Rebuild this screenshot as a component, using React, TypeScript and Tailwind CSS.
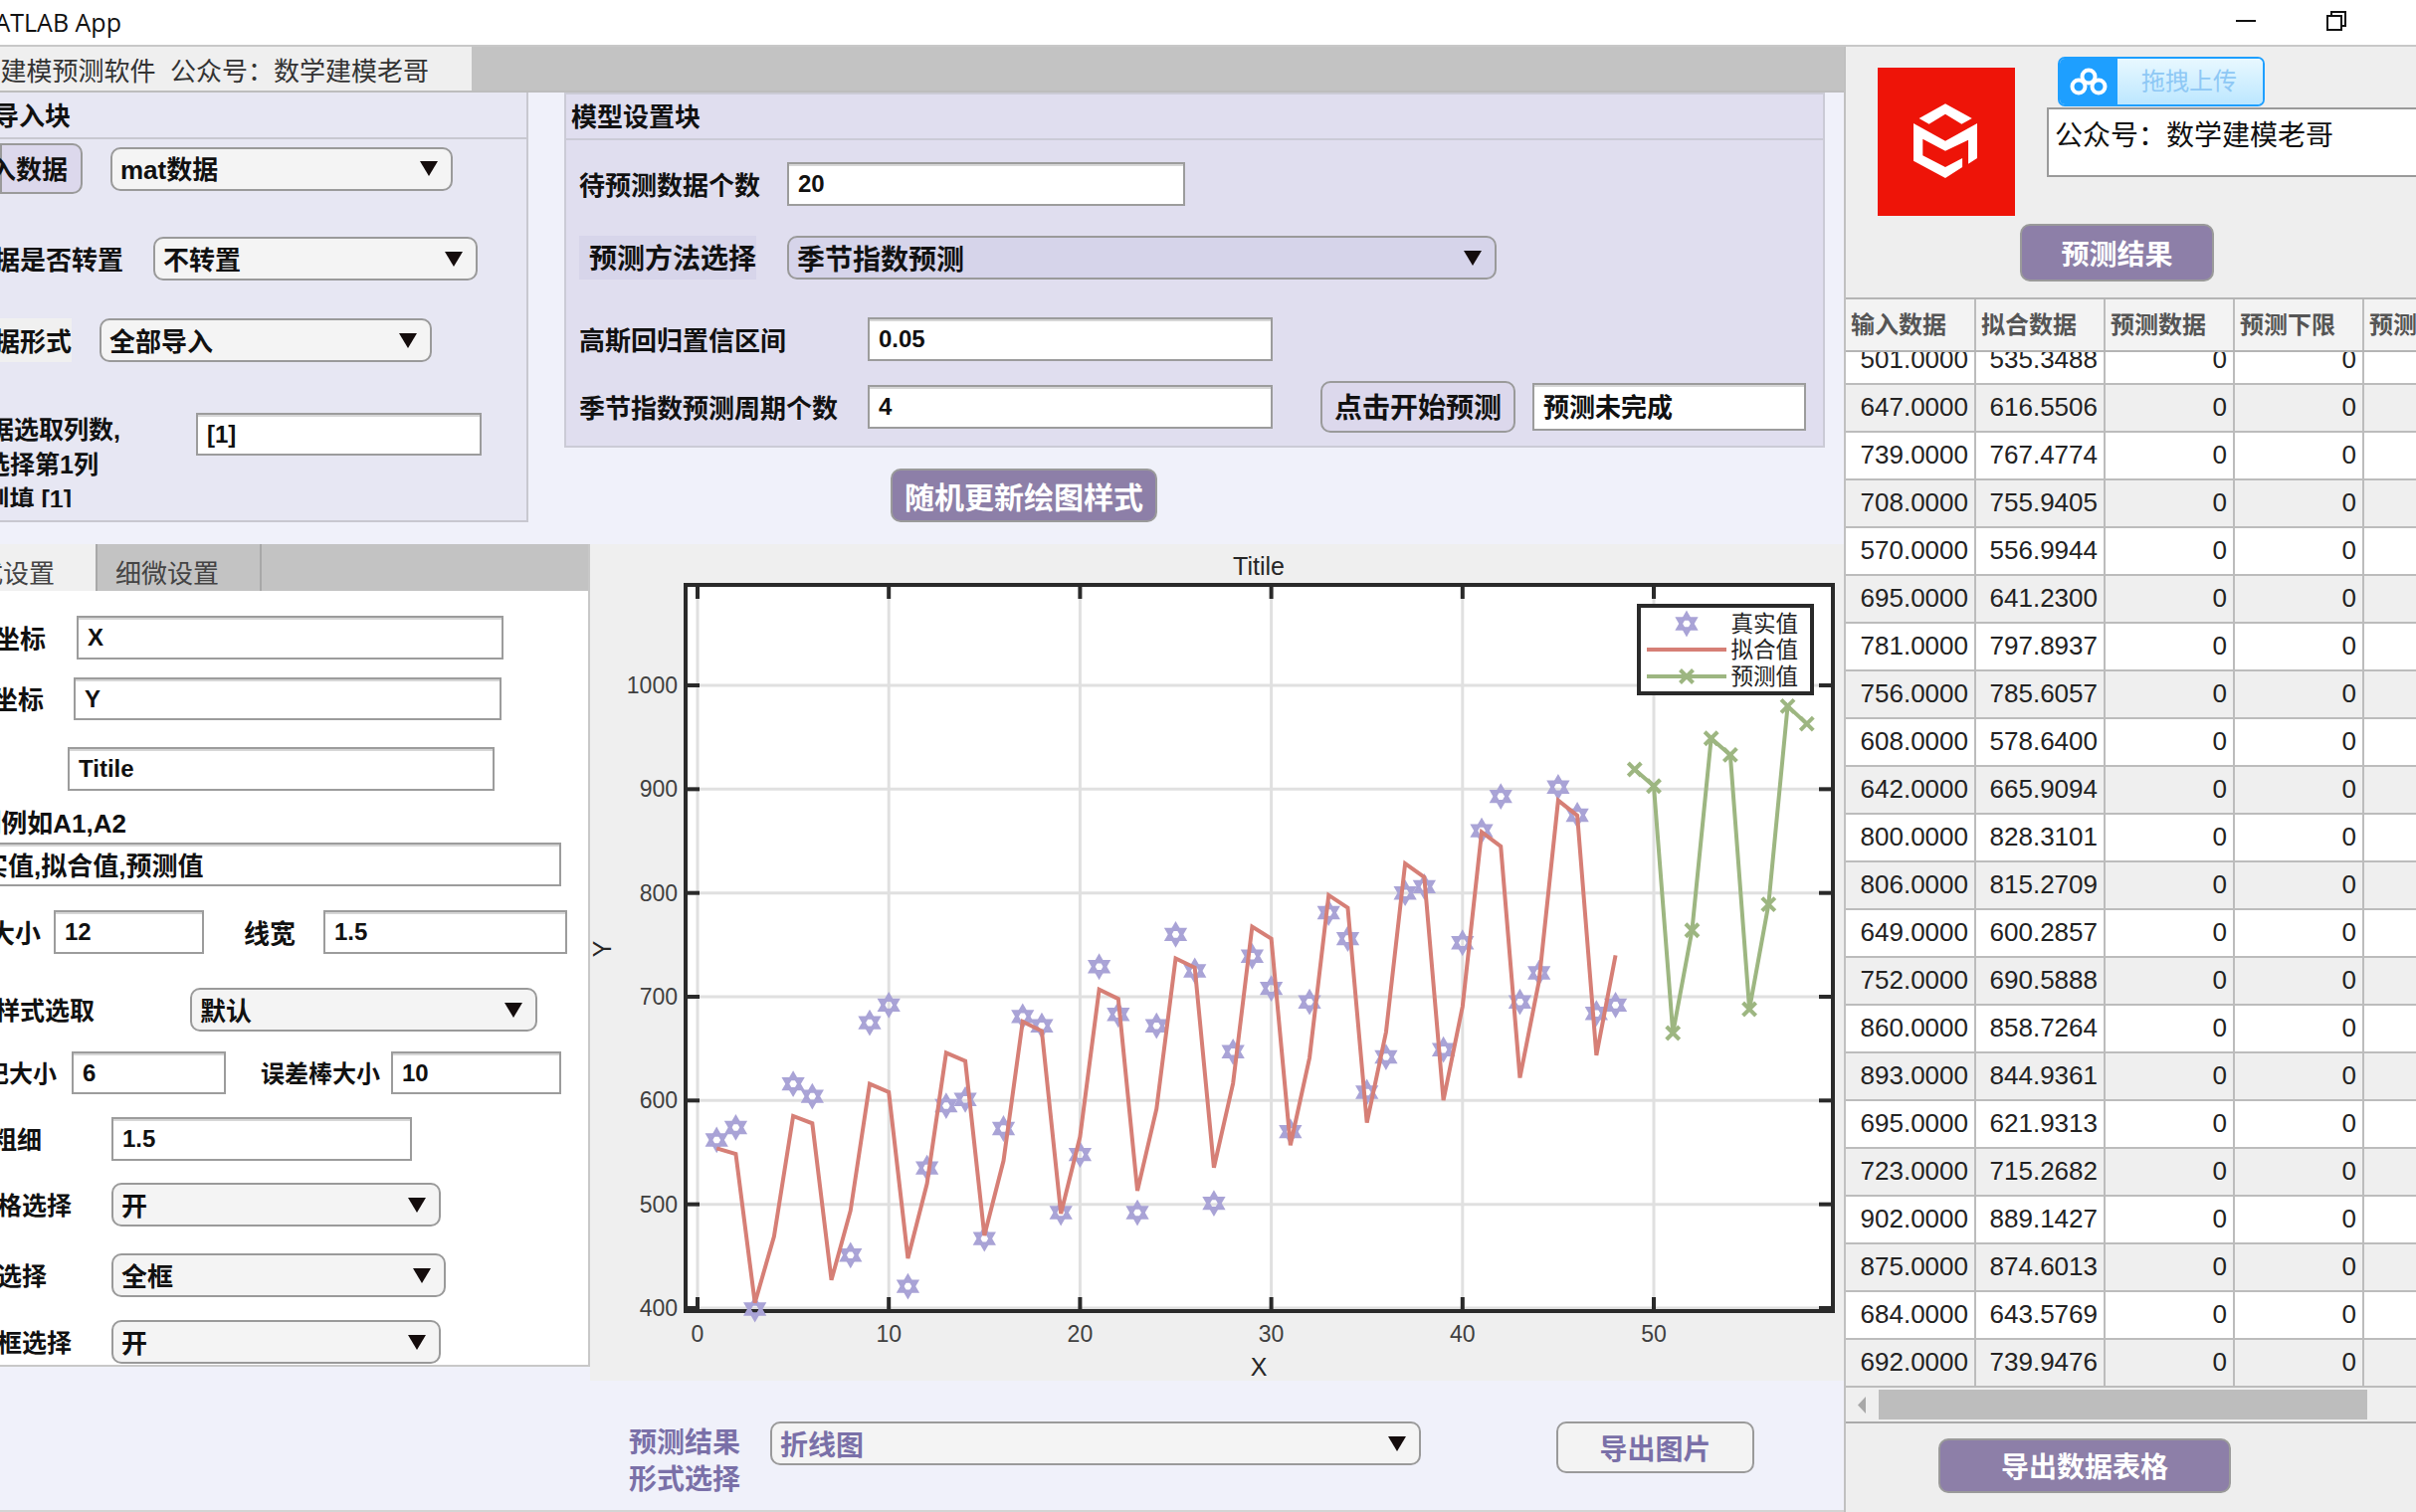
// App.tsx
import React from 'react';

const xp = (x: number) => 701 + x * 19.22;
const yp = (v: number) => 1315 - (v - 400) * 1.0433;

const tableRows: [string, string][] = [
  ['501.0000', '535.3488'], ['647.0000', '616.5506'], ['739.0000', '767.4774'], ['708.0000', '755.9405'],
  ['570.0000', '556.9944'], ['695.0000', '641.2300'], ['781.0000', '797.8937'], ['756.0000', '785.6057'],
  ['608.0000', '578.6400'], ['642.0000', '665.9094'], ['800.0000', '828.3101'], ['806.0000', '815.2709'],
  ['649.0000', '600.2857'], ['752.0000', '690.5888'], ['860.0000', '858.7264'], ['893.0000', '844.9361'],
  ['695.0000', '621.9313'], ['723.0000', '715.2682'], ['902.0000', '889.1427'], ['875.0000', '874.6013'],
  ['684.0000', '643.5769'], ['692.0000', '739.9476'],
];

const actual: [number, number][] = [
  [1, 562], [2, 574], [3, 399], [5, 616], [6, 604], [8, 451], [9, 675], [10, 692], [11, 421], [12, 535],
  [13, 595], [14, 601], [15, 467], [16, 573], [17, 681], [18, 672], [19, 492], [20, 548], [21, 729], [22, 683],
  [23, 492], [24, 672], [25, 760], [26, 725], [27, 501], [28, 647], [29, 739], [30, 708], [31, 570], [32, 695],
  [33, 781], [34, 756], [35, 608], [36, 642], [37, 800], [38, 806], [39, 649], [40, 752], [41, 860], [42, 893],
  [43, 695], [44, 723], [45, 902], [46, 875], [47, 684], [48, 692],
];

const fitted = [
  554, 548.6, 405, 469, 585, 578, 427, 494, 616, 608, 448, 520, 646, 638, 470, 542, 676, 667, 491, 565, 707, 698,
  513, 592, 737, 728, 535.35, 616.55, 767.48, 755.94, 556.99, 641.23, 797.89, 785.61, 578.64, 665.91, 828.31,
  815.27, 600.29, 690.59, 858.73, 844.94, 621.93, 715.27, 889.14, 874.6, 643.58, 739.95,
];

const predicted = [919, 903, 665, 764, 949, 933, 688, 789, 980, 963];

const Arrow = () => (
  <svg width="18" height="15" viewBox="0 0 18 15" className="shrink-0">
    <polygon points="0,0 18,0 9,15" fill="#140c0c" />
  </svg>
);

const Select: React.FC<{ value: string; className: string; textClass?: string }> = ({ value, className, textClass }) => (
  <div className={`box-border h-[44px] shrink-0 rounded-[10px] border-2 border-[#9a9a9a] flex items-center justify-between pl-[8px] pr-[13px] ${className}`}>
    <span className={`leading-none font-bold whitespace-nowrap ${textClass ?? 'pt-[3px] text-[26px] text-[#111]'}`}>{value}</span>
    <Arrow />
  </div>
);

const Input: React.FC<{ value: string; className: string; textClass?: string }> = ({ value, className, textClass }) => (
  <div className={`box-border shrink-0 bg-white border-2 border-[#9c9c9c] shadow-[inset_0_2px_0_#d6d6d6] flex items-center pl-[9px] font-bold whitespace-nowrap text-[#111] ${textClass ?? 'text-[24px]'} ${className}`}>
    {value}
  </div>
);

const Label: React.FC<{ text: string; className: string }> = ({ text, className }) => (
  <div className={`shrink-0 flex justify-end whitespace-nowrap font-bold text-[26px] text-[#111] ${className}`}>
    <span className="shrink-0 leading-none pt-[3px]">{text}</span>
  </div>
);

const Star: React.FC<{ x: number; y: number }> = ({ x, y }) => (
  <g transform={`translate(${x} ${y})`} fill="none" stroke="#a9a3d6" strokeWidth="3.4">
    <polygon points="0,-10 8.7,5 -8.7,5" />
    <polygon points="0,10 8.7,-5 -8.7,-5" />
  </g>
);

const Cross: React.FC<{ x: number; y: number }> = ({ x, y }) => (
  <g stroke="#9db681" strokeWidth="4">
    <line x1={x - 6.5} y1={y - 6.5} x2={x + 6.5} y2={y + 6.5} />
    <line x1={x - 6.5} y1={y + 6.5} x2={x + 6.5} y2={y - 6.5} />
  </g>
);

const Chart = () => {
  const xTicks = [0, 10, 20, 30, 40, 50];
  const yTicks = [400, 500, 600, 700, 800, 900, 1000];
  return (
    <svg width="1260" height="841" viewBox="593 547 1260 841" className="block">
      <rect x="689" y="588" width="1153" height="730" fill="#fff" />
      {xTicks.map((t) => (
        <line key={t} x1={xp(t)} y1="590" x2={xp(t)} y2="1316" stroke="#e0e0e0" strokeWidth="3" />
      ))}
      {yTicks.map((t) => (
        <line key={t} x1="691" y1={yp(t)} x2="1840" y2={yp(t)} stroke="#e0e0e0" strokeWidth="3" />
      ))}
      {xTicks.map((t) => (
        <g key={t} stroke="#2a2a2a" strokeWidth="4">
          <line x1={xp(t)} y1="590" x2={xp(t)} y2="602" />
          <line x1={xp(t)} y1="1304" x2={xp(t)} y2="1316" />
        </g>
      ))}
      {yTicks.map((t) => (
        <g key={t} stroke="#2a2a2a" strokeWidth="4">
          <line x1="691" y1={yp(t)} x2="703" y2={yp(t)} />
          <line x1="1828" y1={yp(t)} x2="1840" y2={yp(t)} />
        </g>
      ))}
      <rect x="689" y="588" width="1153" height="730" fill="none" stroke="#2a2a2a" strokeWidth="4" />
      {actual.map(([x, v]) => (
        <Star key={x} x={xp(x)} y={yp(v)} />
      ))}
      <polyline
        points={fitted.map((v, i) => `${xp(i + 1)},${yp(v)}`).join(' ')}
        fill="none"
        stroke="#d67f76"
        strokeWidth="4"
        strokeLinejoin="miter"
      />
      <polyline
        points={predicted.map((v, i) => `${xp(i + 49)},${yp(v)}`).join(' ')}
        fill="none"
        stroke="#9db681"
        strokeWidth="4"
      />
      {predicted.map((v, i) => (
        <Cross key={i} x={xp(i + 49)} y={yp(v)} />
      ))}
      <g fill="#404040" fontSize="23">
        {xTicks.map((t) => (
          <text key={t} x={xp(t)} y="1349" textAnchor="middle">{t}</text>
        ))}
        {yTicks.map((t) => (
          <text key={t} x="681" y={yp(t) + 8} textAnchor="end">{t}</text>
        ))}
      </g>
      <g fill="#262626" fontSize="25" textAnchor="middle">
        <text x="1265" y="578">Titile</text>
        <text x="1265" y="1383">X</text>
        <text transform="translate(614 954) rotate(-90)">Y</text>
      </g>
      <rect x="1647" y="609" width="174" height="88" fill="#fff" stroke="#2a2a2a" strokeWidth="4" />
      <Star x={1695} y={627} />
      <line x1="1655" y1="653" x2="1735" y2="653" stroke="#d67f76" strokeWidth="4" />
      <line x1="1655" y1="680" x2="1735" y2="680" stroke="#9db681" strokeWidth="4" />
      <Cross x={1695} y={680} />
      <g fill="#222" fontSize="22.5" textAnchor="end">
        <text x="1807" y="635">真实值</text>
        <text x="1807" y="661">拟合值</text>
        <text x="1807" y="688">预测值</text>
      </g>
    </svg>
  );
};

const DataPanel = () => (
  <div className="box-border w-[531px] h-[432px] shrink-0 bg-[#e7e7f3] border-r-2 border-b-2 border-[#c8c8d0] overflow-hidden">
    <div className="h-[47px] border-b-2 border-[#c8c8d0] box-border flex items-center">
      <Label text="数据导入块" className="w-[71px]" />
    </div>
    <div className="flex items-center mt-[4px]">
      <div className="box-border w-[83px] h-[51px] shrink-0 bg-[#dcd8ec] border-2 border-[#9a9a9a] rounded-r-[10px] flex justify-end items-center pr-[13px] pt-[4px] font-bold text-[26px] text-[#111] whitespace-nowrap">
        <span className="shrink-0">导入数据</span>
      </div>
      <Select value="mat数据" className="w-[344px] ml-[28px] bg-[#f4f4f4]" />
    </div>
    <div className="flex items-center mt-[43px]">
      <Label text="数据是否转置" className="w-[124px]" />
      <Select value="不转置" className="w-[326px] ml-[30px] bg-[#f4f4f4]" />
    </div>
    <div className="flex items-center mt-[38px]">
      <Label text="数据形式" className="w-[72px] h-[44px] items-center bg-[#f0f0f0]" />
      <Select value="全部导入" className="w-[334px] ml-[28px] bg-[#f4f4f4]" />
    </div>
    <div className="flex items-start mt-[51px]">
      <div className="w-[125px] h-[95px] shrink-0 overflow-hidden font-bold text-[25px] leading-[35px] text-[#111]">
        <div className="w-[121px] flex justify-end whitespace-nowrap"><span className="shrink-0">据选取列数,</span></div>
        <div className="w-[99px] flex justify-end whitespace-nowrap"><span className="shrink-0">选择第1列</span></div>
        <div className="w-[72px] flex justify-end whitespace-nowrap"><span className="shrink-0">则填 [1]</span></div>
      </div>
      <Input value="[1]" className="w-[287px] h-[43px] ml-[72px]" />
    </div>
  </div>
);

const ModelPanel = () => (
  <div className="box-border w-[1267px] h-[357px] bg-[#e0deef] border-2 border-[#cbcbd6]">
    <div className="box-border h-[46px] border-b-2 border-[#cbcbd6] flex items-center pl-[5px] pt-[3px] font-bold text-[26px] text-[#111]">
      模型设置块
    </div>
    <div className="flex items-center ml-[13px] mt-[22px]">
      <Label text="待预测数据个数" className="w-[209px] !justify-start" />
      <Input value="20" className="w-[400px] h-[44px]" />
    </div>
    <div className="flex items-center ml-[13px] mt-[30px]">
      <div className="w-[178px] h-[44px] shrink-0 bg-[#d7d5ea] pl-[10px] pt-[4px] flex items-center font-bold text-[28px] text-[#111] whitespace-nowrap">
        预测方法选择
      </div>
      <Select value="季节指数预测" className="w-[713px] ml-[31px] bg-[#d6d4ea]" textClass="pt-[5px] text-[28px] text-[#111]" />
    </div>
    <div className="flex items-center ml-[13px] mt-[38px]">
      <Label text="高斯回归置信区间" className="w-[290px] !justify-start" />
      <Input value="0.05" className="w-[407px] h-[44px]" />
    </div>
    <div className="flex items-center h-[52px] ml-[13px] mt-[20px]">
      <Label text="季节指数预测周期个数" className="w-[290px] !justify-start" />
      <Input value="4" className="w-[407px] h-[44px]" />
      <div className="box-border w-[196px] h-[52px] ml-[48px] shrink-0 bg-[#dcd8ec] border-2 border-[#9a9a9a] rounded-[10px] flex items-center justify-center pt-[4px] font-bold text-[28px] text-[#111] whitespace-nowrap">
        点击开始预测
      </div>
      <Input value="预测未完成" className="w-[275px] h-[48px] ml-[17px]" textClass="text-[26px] pt-[3px]" />
    </div>
  </div>
);

const SettingsPanel = () => (
  <div className="box-border w-[593px] h-[827px] shrink-0 self-start bg-white border-r-2 border-b-2 border-[#c8c8c8] overflow-hidden">
    <div className="h-[47px] bg-[#c3c3c3] flex text-[26px] text-[#444]">
      <div className="w-[98px] bg-[#f0f0f0] flex justify-end items-center pr-[41px] pt-[14px] whitespace-nowrap border-r-2 border-[#a8a8a8]">
        <span className="shrink-0">样式设置</span>
      </div>
      <div className="w-[165px] pl-[18px] pt-[14px] flex items-center border-r-2 border-[#a8a8a8]">细微设置</div>
    </div>
    <div className="flex items-center mt-[25px]">
      <Label text="X坐标" className="w-[46px]" />
      <Input value="X" className="w-[429px] h-[44px] ml-[31px]" />
    </div>
    <div className="flex items-center mt-[18px]">
      <Label text="Y坐标" className="w-[44px]" />
      <Input value="Y" className="w-[430px] h-[43px] ml-[30px]" />
    </div>
    <Input value="Titile" className="w-[429px] h-[44px] ml-[68px] mt-[27px]" />
    <div className="flex items-center h-[36px] mt-[13px]">
      <Label text="列例如A1,A2" className="w-[127px]" />
    </div>
    <Input value="真实值,拟合值,预测值" className="w-[619px] h-[44px] ml-[-55px] mt-[3px]" textClass="text-[26px] pt-[4px]" />
    <div className="flex items-center mt-[24px]">
      <Label text="大小" className="w-[41px]" />
      <Input value="12" className="w-[151px] h-[44px] ml-[13px]" />
      <Label text="线宽" className="ml-[40px] w-[52px]" />
      <Input value="1.5" className="w-[245px] h-[44px] ml-[28px]" />
    </div>
    <div className="flex items-center mt-[34px]">
      <Label text="样式选取" className="w-[95px] !text-[25px]" />
      <Select value="默认" className="w-[349px] ml-[96px] bg-[#f4f4f4]" />
    </div>
    <div className="flex items-center mt-[20px]">
      <Label text="标记大小" className="w-[57px] !text-[24px]" />
      <Input value="6" className="w-[155px] h-[43px] ml-[15px]" />
      <Label text="误差棒大小" className="w-[119px] ml-[36px] !text-[24px]" />
      <Input value="10" className="w-[171px] h-[43px] ml-[11px]" />
    </div>
    <div className="flex items-center mt-[23px]">
      <Label text="线粗细" className="w-[42px] !text-[25px]" />
      <Input value="1.5" className="w-[302px] h-[44px] ml-[70px]" />
    </div>
    <div className="flex items-center mt-[22px]">
      <Label text="网格选择" className="w-[72px] !text-[25px]" />
      <Select value="开" className="w-[331px] ml-[40px] bg-[#f4f4f4]" />
    </div>
    <div className="flex items-center mt-[27px]">
      <Label text="框选择" className="w-[47px] !text-[25px]" />
      <Select value="全框" className="w-[336px] ml-[65px] bg-[#f4f4f4]" />
    </div>
    <div className="flex items-center mt-[23px]">
      <Label text="图框选择" className="w-[72px] !text-[25px]" />
      <Select value="开" className="w-[331px] ml-[40px] bg-[#f4f4f4]" />
    </div>
  </div>
);

const ResultTable = () => {
  const headers = ['输入数据', '拟合数据', '预测数据', '预测下限', '预测上限'];
  const cellBase = 'box-border shrink-0 h-[48px] border-r-2 border-b-2 border-[#bcbcbc] flex items-center justify-end pr-[6px] pb-[2px]';
  return (
    <div className="mt-[16px]">
      <div className="box-border h-[55px] flex bg-[#f3f3f3] border-t-2 border-b-2 border-[#b4b4b4]">
        {headers.map((h, i) => (
          <div
            key={h}
            className={`box-border shrink-0 border-r-2 border-[#bcbcbc] flex items-center pl-[5px] font-bold text-[24px] text-[#555] whitespace-nowrap ${i === 0 ? 'w-[131px]' : 'w-[130px]'}`}
          >
            {h}
          </div>
        ))}
      </div>
      {tableRows.map(([a, b], i) => (
        <div
          key={i}
          className={`flex text-[26px] text-[#222] ${i === 0 ? 'h-[33px] items-end overflow-hidden' : 'h-[48px]'} ${i % 2 === 1 ? 'bg-[#efefef]' : 'bg-white'}`}
        >
          <div className={`${cellBase} w-[131px]`}>{a}</div>
          <div className={`${cellBase} w-[130px]`}>{b}</div>
          <div className={`${cellBase} w-[130px]`}>0</div>
          <div className={`${cellBase} w-[130px]`}>0</div>
          <div className={`${cellBase} w-[130px]`} />
        </div>
      ))}
      <div className="box-border h-[36px] bg-[#efefef] border-b-2 border-[#aaa] flex items-center">
        <svg width="8" height="17" viewBox="0 0 8 17" className="ml-[12px] shrink-0">
          <polygon points="8,0 8,17 0,8.5" fill="#a8a8a8" />
        </svg>
        <div className="w-[491px] h-[30px] ml-[13px] shrink-0 bg-[#bdbdbd]" />
      </div>
    </div>
  );
};

const RightPanel = () => (
  <div className="box-border w-[575px] shrink-0 bg-[#eeeeee] border-l-2 border-[#c0c0c0] overflow-hidden">
    <div className="flex items-start mt-[10px] h-[160px]">
      <div className="w-[138px] h-[149px] ml-[32px] mt-[11px] shrink-0 bg-[#ee1408] flex items-center justify-center">
        <svg width="64" height="75" viewBox="220 305 172 225" preserveAspectRatio="none" className="mb-[2px] mr-[2px]">
          <polygon points="306,306 378,350 350,367 306,337 262,367 235,350" fill="#fff" />
          <polygon
            points="220,365 306,418 392,365 392,470 368,487 368,415 306,448 245,412 245,462 306,497 352,470 352,497 306,530 220,478"
            fill="#fff"
          />
        </svg>
      </div>
      <div className="ml-[32px] shrink-0">
        <div className="box-border w-[208px] h-[50px] ml-[11px] border-2 border-[#1e9fff] rounded-[7px] overflow-hidden flex">
          <div className="w-[58px] shrink-0 bg-[#1e9fff] flex items-center justify-center">
            <svg width="38" height="30" viewBox="0 0 38 30">
              <g fill="none" stroke="#fff" strokeWidth="4">
                <circle cx="19" cy="10" r="6.5" />
                <circle cx="9" cy="20" r="6.5" />
                <circle cx="29" cy="20" r="6.5" />
              </g>
            </svg>
          </div>
          <div className="flex-1 bg-gradient-to-b from-[#e8f8ff] to-[#bce7ff] flex items-center pl-[24px] text-[24px] text-[#8ec8f5] whitespace-nowrap">
            拖拽上传
          </div>
        </div>
        <div className="box-border w-[420px] h-[70px] mt-[1px] bg-white border-2 border-[#9a9a9a] pl-[6px] pt-[7px] text-[28px] leading-[40px] text-[#111] whitespace-nowrap">
          公众号：数学建模老哥
        </div>
      </div>
    </div>
    <div className="box-border w-[195px] h-[58px] ml-[175px] mt-[8px] bg-[#8d7fa8] border-2 border-[#9a9a9a] rounded-[10px] flex items-center justify-center pt-[6px] font-bold text-[28px] text-white">
      预测结果
    </div>
    <ResultTable />
    <div className="box-border w-[294px] h-[55px] ml-[93px] mt-[15px] bg-[#8d7fa8] border-2 border-[#9a9a9a] rounded-[10px] flex items-center justify-center pt-[5px] font-bold text-[28px] text-white">
      导出数据表格
    </div>
  </div>
);

const App: React.FC = () => {
  return (
    <div className="w-[2428px] h-[1520px] overflow-hidden flex flex-col bg-[#f0f1fa] font-['Liberation_Sans','Noto_Sans_CJK_SC',sans-serif]">
      <div className="box-border h-[47px] shrink-0 bg-white border-b-2 border-[#c8c8c8] flex items-center">
        <span className="ml-[-28px] font-['Open_Sans','Noto_Sans_CJK_SC',sans-serif] text-[25px] text-[#111] whitespace-nowrap">MATLAB App</span>
        <svg width="20" height="2" viewBox="0 0 20 2" className="ml-auto mb-[3px]">
          <rect width="20" height="2" fill="#111" />
        </svg>
        <svg width="20" height="20" viewBox="0 0 20 20" className="ml-[71px] mr-[70px] mb-[3px]" fill="none" stroke="#111" strokeWidth="2">
          <rect x="1" y="5" width="14" height="14" />
          <path d="M5 5V1H19V15H15" />
        </svg>
      </div>
      <div className="flex flex-1 min-h-0">
        <div className="w-[1853px] shrink-0 flex flex-col">
          <div className="box-border h-[46px] shrink-0 bg-[#c3c3c3] border-b-2 border-[#bdbdbd] flex">
            <div className="w-[474px] bg-[#efefef] flex justify-end items-center pr-[43px] pt-[7px] whitespace-nowrap text-[26px] text-[#333]">
              <span className="shrink-0">数学建模预测软件&nbsp;&nbsp;公众号：数学建模老哥</span>
            </div>
          </div>
          <div className="h-[454px] shrink-0 flex items-start">
            <DataPanel />
            <div className="ml-[36px] flex flex-col items-start">
              <ModelPanel />
              <div className="box-border w-[268px] h-[54px] ml-[328px] mt-[21px] bg-[#8d7fa8] border-2 border-[#9a9a9a] rounded-[10px] flex items-center justify-center pt-[5px] font-bold text-[30px] text-white whitespace-nowrap">
                随机更新绘图样式
              </div>
            </div>
          </div>
          <div className="h-[841px] shrink-0 flex">
            <SettingsPanel />
            <div className="w-[1260px] h-[841px] shrink-0 bg-[#efefef]">
              <Chart />
            </div>
          </div>
          <div className="box-border flex-1 flex items-start border-b-2 border-[#d4d4d4]">
            <div className="ml-[632px] mt-[44px] w-[112px] shrink-0 font-bold text-[28px] leading-[37px] text-[#7a70a8]">
              <div className="whitespace-nowrap">预测结果</div>
              <div className="whitespace-nowrap">形式选择</div>
            </div>
            <Select value="折线图" className="w-[654px] ml-[30px] mt-[41px] bg-[#f4f4f4]" textClass="pt-[6px] text-[28px] text-[#7a70a8]" />
            <div className="box-border w-[199px] h-[52px] ml-[136px] mt-[41px] shrink-0 bg-[#f3f3f3] border-2 border-[#9a9a9a] rounded-[10px] flex items-center justify-center pt-[6px] font-bold text-[28px] text-[#7a70a8]">
              导出图片
            </div>
          </div>
        </div>
        <RightPanel />
      </div>
    </div>
  );
};

export default App;
